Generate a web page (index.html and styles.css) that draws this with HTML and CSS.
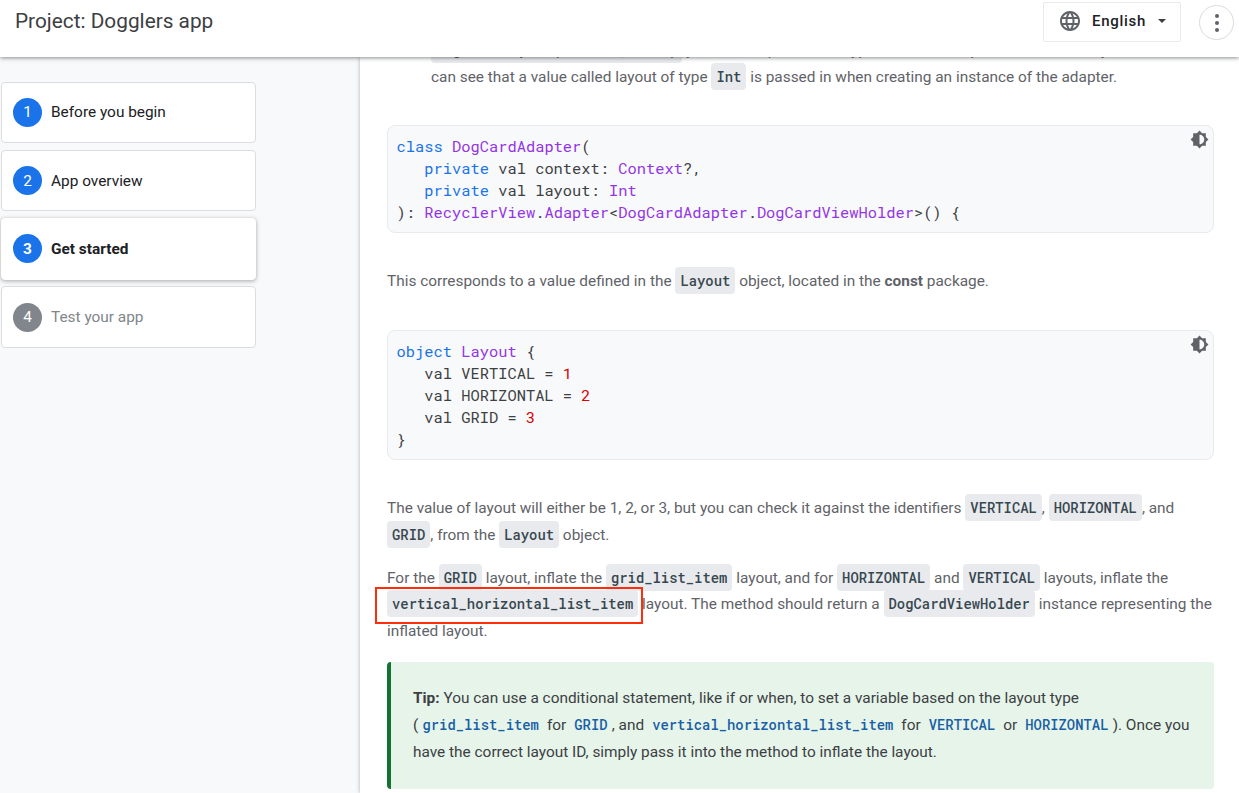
FILE: index.html
```html
<!DOCTYPE html>
<html lang="en">
<head>
    <meta charset="UTF-8">
    <meta name="viewport" content="width=device-width, initial-scale=1.0">
    <title>Project: Dogglers app</title>
    <link rel="stylesheet" href="styles.css">
</head>
<body>
    <header class="top-bar">
        <h1 class="project-title">Project: Dogglers app</h1>
        <div class="top-actions">
            <div class="lang-select">
                <svg class="globe" viewBox="0 0 24 24" width="24" height="24"><path fill="#5f6368" d="M11.99 2C6.47 2 2 6.48 2 12s4.47 10 9.99 10C17.52 22 22 17.52 22 12S17.52 2 11.99 2zm6.93 6h-2.95a15.65 15.65 0 0 0-1.38-3.56A8.03 8.03 0 0 1 18.92 8zM12 4.04c.83 1.2 1.48 2.53 1.91 3.96h-3.82c.43-1.43 1.08-2.76 1.91-3.96zM4.26 14C4.1 13.36 4 12.69 4 12s.1-1.36.26-2h3.38c-.08.66-.14 1.32-.14 2s.06 1.34.14 2H4.26zm.82 2h2.95c.32 1.25.78 2.45 1.38 3.56A7.987 7.987 0 0 1 5.08 16zm2.95-8H5.08a7.987 7.987 0 0 1 4.33-3.56A15.65 15.65 0 0 0 8.03 8zM12 19.96c-.83-1.2-1.48-2.53-1.91-3.96h3.82c-.43 1.43-1.08 2.76-1.91 3.96zM14.34 14H9.66c-.09-.66-.16-1.32-.16-2s.07-1.35.16-2h4.68c.09.65.16 1.32.16 2s-.07 1.34-.16 2zm.25 5.56c.6-1.11 1.06-2.31 1.38-3.56h2.95a8.03 8.03 0 0 1-4.33 3.56zM16.36 14c.08-.66.14-1.32.14-2s-.06-1.34-.14-2h3.38c.16.64.26 1.31.26 2s-.1 1.36-.26 2h-3.38z"/></svg>
                <span class="lang-name">English</span>
                <span class="caret"></span>
            </div>
            <button class="more-btn">
                <span class="dot"></span>
                <span class="dot"></span>
                <span class="dot"></span>
            </button>
        </div>
    </header>

    <div class="page">
        <nav class="steps">
            <div class="step step-first"><span class="step-num">1</span>Before you begin</div>
            <div class="step"><span class="step-num">2</span>App overview</div>
            <div class="step step-active"><span class="step-num">3</span>Get started</div>
            <div class="step step-todo"><span class="step-num">4</span>Test your app</div>
        </nav>

        <main class="content">
            <p class="lead"><code>DogCardAdapter(context, item)</code> you have to pass in the type when the adapter is made. Also, you<br>
                can see that a value called layout of type <code>Int</code> is passed in when creating an instance of the adapter.</p>

            <div class="code-block">
                <svg class="theme-icon" viewBox="0 0 24 24" width="24" height="24"><path fill="#5f6368" d="M20 15.31 23.31 12 20 8.69V4h-4.69L12 .69 8.69 4H4v4.69L.69 12 4 15.31V20h4.69L12 23.31 15.31 20H20v-4.69zM12 18V6c3.31 0 6 2.69 6 6s-2.69 6-6 6z"/></svg>
<pre><span class="kw">class</span> <span class="ty">DogCardAdapter</span>(
   <span class="kw">private</span> val context: <span class="ty">Context</span>?,
   <span class="kw">private</span> val layout: <span class="ty">Int</span>
): <span class="ty">RecyclerView</span>.<span class="ty">Adapter</span>&lt;<span class="ty">DogCardAdapter</span>.<span class="ty">DogCardViewHolder</span>&gt;() {</pre>
            </div>

            <p class="para-mid">This corresponds to a value defined in the <code>Layout</code> object, located in the <strong>const</strong> package.</p>

            <div class="code-block">
                <svg class="theme-icon" viewBox="0 0 24 24" width="24" height="24"><path fill="#5f6368" d="M20 15.31 23.31 12 20 8.69V4h-4.69L12 .69 8.69 4H4v4.69L.69 12 4 15.31V20h4.69L12 23.31 15.31 20H20v-4.69zM12 18V6c3.31 0 6 2.69 6 6s-2.69 6-6 6z"/></svg>
<pre><span class="kw">object</span> <span class="ty">Layout</span> {
   val VERTICAL = <span class="num">1</span>
   val HORIZONTAL = <span class="num">2</span>
   val GRID = <span class="num">3</span>
}</pre>
            </div>

            <p class="para-value">The value of layout will either be 1, 2, or 3, but you can check it against the identifiers <code>VERTICAL</code>, <code>HORIZONTAL</code>, and <code>GRID</code>, from the <code>Layout</code> object.</p>

            <p class="para-grid">For the <code>GRID</code> layout, inflate the <code>grid_list_item</code> layout, and for <code>HORIZONTAL</code> and <code>VERTICAL</code> layouts, inflate the <code class="marked">vertical_horizontal_list_item</code> layout. The method should return a <code>DogCardViewHolder</code> instance representing the inflated layout.</p>

            <aside class="tip">
                <p><strong>Tip:</strong> You can use a conditional statement, like if or when, to set a variable based on the layout type (<code>grid_list_item</code> for <code>GRID</code>, and <code>vertical_horizontal_list_item</code> for <code>VERTICAL</code> or <code>HORIZONTAL</code>). Once you have the correct layout ID, simply pass it into the method to inflate the layout.</p>
            </aside>
        </main>
    </div>
</body>
</html>
```

FILE: styles.css
```css
* {
    box-sizing: border-box;
}

html, body {
    margin: 0;
    height: 100%;
    overflow: hidden;
}

body {
    display: flex;
    flex-direction: column;
    font-family: Roboto, "Liberation Sans", sans-serif;
    color: #5f6368;
    background-color: #f8f9fa;
}

.top-bar {
    height: 57px;
    flex: none;
    display: flex;
    justify-content: space-between;
    background-color: #fff;
    box-shadow: 0 1px 4px rgba(60, 64, 67, 0.6);
    position: relative;
    z-index: 2;
}

.project-title {
    margin: 0;
    padding: 6px 0 0 15px;
    font-size: 20.8px;
    line-height: 30px;
    font-weight: 400;
    color: #3c4043;
}

.top-actions {
    display: flex;
    padding: 2px 5px 0 0;
}

.lang-select {
    width: 138px;
    height: 40px;
    border: 1px solid #e8eaed;
    border-radius: 2px;
    display: flex;
    align-items: center;
    padding: 0 0 2px 14px;
    color: #202124;
    font-size: 15px;
    font-weight: 500;
    letter-spacing: 0.7px;
}

.globe {
    flex: none;
}

.lang-name {
    margin-left: 10px;
}

.caret {
    margin-left: 12px;
    border-left: 4px solid transparent;
    border-right: 4px solid transparent;
    border-top: 4px solid #3c4043;
}

.more-btn {
    width: 35px;
    height: 35px;
    margin: 3px 0 0 18px;
    padding: 0;
    background: #fff;
    border: 1px solid #dadce0;
    border-radius: 50%;
    display: flex;
    flex-direction: column;
    align-items: center;
    justify-content: center;
    gap: 3px;
}

.dot {
    width: 4px;
    height: 4px;
    border-radius: 50%;
    background-color: #5f6368;
}

.page {
    flex: 1;
    display: flex;
    min-height: 0;
}

.steps {
    width: 360px;
    flex: none;
    padding: 25px 0 0 1px;
}

.step {
    width: 255px;
    height: 61px;
    margin-bottom: 7px;
    display: flex;
    align-items: center;
    padding-left: 11px;
    background-color: #fff;
    border: 1px solid #dadce0;
    border-radius: 4px;
    font-size: 15.4px;
    color: #202124;
}

.step-first {
    height: 60.6px;
    margin-bottom: 7.45px;
}

.step-num {
    width: 29px;
    height: 29px;
    flex: none;
    margin-right: 9px;
    border-radius: 50%;
    background-color: #1a73e8;
    color: #fff;
    display: flex;
    align-items: center;
    justify-content: center;
    font-size: 15.4px;
    font-weight: 400;
}

.step-active {
    height: 61.6px;
    margin-bottom: 6.4px;
    font-weight: 700;
    border-color: #fff;
    box-shadow: 0 1px 4px rgba(60, 64, 67, 0.45);
}

.step-active .step-num {
    font-weight: 700;
}

.step-todo {
    height: 62px;
    color: #80868b;
}

.step-todo .step-num {
    background-color: #80868b;
}

.content {
    flex: 1;
    min-width: 0;
    background-color: #fff;
    box-shadow: 0 0 4px rgba(60, 64, 67, 0.4);
    padding: 0 25px 0 27px;
    font-size: 15.4px;
    line-height: 26.95px;
    overflow: hidden;
}

.content p {
    margin: 0;
}

.content .lead {
    margin: -20px 0 34px 44px;
}

code {
    font-family: "Roboto Mono", "DejaVu Sans Mono", monospace;
    font-size: 13.86px;
    font-weight: 500;
    color: #37474f;
    background-color: #e8eaed;
    padding: 4px 5px;
    border-radius: 4px;
}

.marked {
    position: relative;
}

.marked::after {
    content: "";
    position: absolute;
    top: -3px;
    bottom: -7px;
    left: -12px;
    right: -5px;
    border: 2px solid #ff2d0a;
}

.code-block {
    position: relative;
    background-color: #f8f9fa;
    border: 1px solid #e8eaed;
    border-radius: 8px;
    padding: 9px 9px 9px 8.6px;
}

.theme-icon {
    position: absolute;
    top: 4px;
    right: 4px;
    width: 19px;
    height: 19px;
}

.code-block pre {
    margin: 0;
    font-family: "Roboto Mono", "DejaVu Sans Mono", monospace;
    font-size: 15.4px;
    line-height: 22px;
    color: #3c4043;
}

.kw {
    color: #1a73e8;
}

.ty {
    color: #9334e6;
}

.num {
    color: #d50000;
}

.content .para-mid {
    margin: 35px 0 35px;
}

.content .para-value {
    margin: 35px 0 16px;
}

.content .para-grid {
    margin-bottom: 17.3px;
    line-height: 26.6px;
}

.tip {
    background-color: #e6f4ea;
    border-left: 4px solid #137333;
    border-radius: 4px;
    padding: 23.4px 20px 23px 22px;
    color: #3c4043;
}

.tip code {
    background: none;
    color: #185fa5;
    padding: 4.2px;
}
```
